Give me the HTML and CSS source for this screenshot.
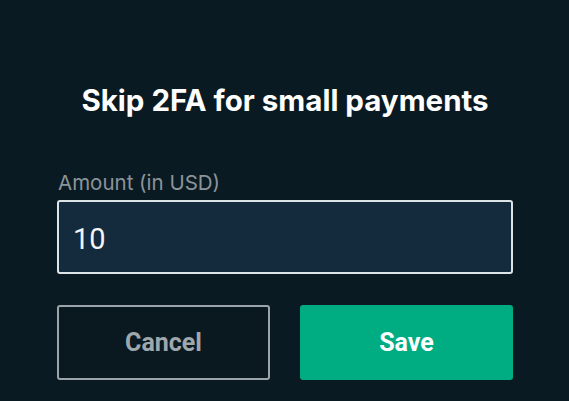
FILE: index.html
```html
<!DOCTYPE html>
<html>
<head>
<meta charset="utf-8">
<link rel="stylesheet" href="styles.css">
</head>
<body>
<div class="dialog">
  <h1 class="title">Skip 2FA for small payments</h1>
  <label class="label" for="amount">Amount (in USD)</label>
  <div class="input">10</div>
  <div class="actions">
    <button class="btn btn-cancel">Cancel</button>
    <button class="btn btn-save">Save</button>
  </div>
</div>
</body>
</html>
```

FILE: styles.css
```css
html, body {
  margin: 0;
  padding: 0;
  background: #0a1a22;
  height: 100%;
}
.dialog {
  display: flex;
  flex-direction: column;
  padding: 82px 56px 0 57px;
  font-family: Roboto, "Liberation Sans", sans-serif;
}
.title {
  margin: 0;
  text-align: center;
  font-family: Inter, Roboto, sans-serif;
  font-weight: 700;
  font-size: 29.5px;
  line-height: 36px;
  color: #ffffff;
}
.label {
  margin-top: 52px;
  padding-left: 1px;
  font-family: Inter, Roboto, sans-serif;
  font-size: 20.5px;
  line-height: 26px;
  color: #8a949a;
}
.input {
  margin-top: 4px;
  box-sizing: border-box;
  height: 74px;
  border: 2px solid #dde4e8;
  border-radius: 3px;
  background: #142a3d;
  color: #f2f5f7;
  font-size: 29px;
  display: flex;
  align-items: center;
  padding: 3px 0 0 14px;
}
.actions {
  margin-top: 31px;
  display: grid;
  grid-template-columns: 213px 213px;
  gap: 30px;
}
.btn {
  height: 75px;
  box-sizing: border-box;
  border-radius: 3px;
  font-family: Roboto, sans-serif;
  font-weight: 700;
  font-size: 25px;
  cursor: pointer;
}
.btn-cancel {
  background: #0a1820;
  border: 2px solid #9ba4a9;
  color: #9ea7ad;
}
.btn-save {
  background: #00ad82;
  border: none;
  color: #ffffff;
}
```
